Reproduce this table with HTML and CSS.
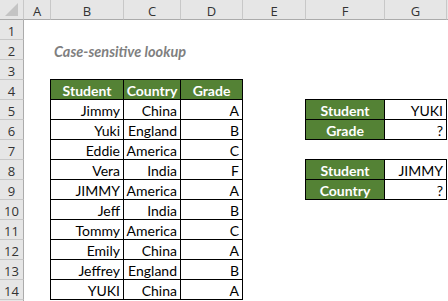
FILE: index.html
```html
<!DOCTYPE html>
<html>
<head>
<meta charset="utf-8">
<link rel="stylesheet" href="styles.css">
</head>
<body>
<div class="sheet">
  <div class="corner"><svg width="20" height="17" viewBox="0 0 20 17"><polygon points="18,3 18,16 5,16" fill="#c4c4c4"/></svg></div>
  <div class="ch">A</div><div class="ch">B</div><div class="ch">C</div><div class="ch">D</div><div class="ch">E</div><div class="ch">F</div><div class="ch">G</div><div class="ch end"></div>

  <div class="rh">1</div><div class="c"></div><div class="c"></div><div class="c"></div><div class="c"></div><div class="c"></div><div class="c"></div><div class="c"></div><div class="c"></div>

  <div class="rh">2</div><div class="c"></div><div class="c title span3">Case-sensitive lookup</div><div class="c"></div><div class="c"></div><div class="c"></div><div class="c"></div>

  <div class="rh">3</div><div class="c"></div><div class="c"></div><div class="c"></div><div class="c"></div><div class="c"></div><div class="c"></div><div class="c"></div><div class="c"></div>

  <div class="rh">4</div><div class="c"></div><div class="c hd bl bt">Student</div><div class="c hd bt">Country</div><div class="c hd bt">Grade</div><div class="c"></div><div class="c"></div><div class="c"></div><div class="c"></div>

  <div class="rh">5</div><div class="c"></div><div class="c td bl">Jimmy</div><div class="c td">China</div><div class="c td">A</div><div class="c"></div><div class="c hd bl bt">Student</div><div class="c td bt">YUKI</div><div class="c"></div>

  <div class="rh">6</div><div class="c"></div><div class="c td bl">Yuki</div><div class="c td">England</div><div class="c td">B</div><div class="c"></div><div class="c hd bl">Grade</div><div class="c td">?</div><div class="c"></div>

  <div class="rh">7</div><div class="c"></div><div class="c td bl">Eddie</div><div class="c td">America</div><div class="c td">C</div><div class="c"></div><div class="c"></div><div class="c"></div><div class="c"></div>

  <div class="rh">8</div><div class="c"></div><div class="c td bl">Vera</div><div class="c td">India</div><div class="c td">F</div><div class="c"></div><div class="c hd bl bt">Student</div><div class="c td bt">JIMMY</div><div class="c"></div>

  <div class="rh">9</div><div class="c"></div><div class="c td bl">JIMMY</div><div class="c td">America</div><div class="c td">A</div><div class="c"></div><div class="c hd bl">Country</div><div class="c td">?</div><div class="c"></div>

  <div class="rh">10</div><div class="c"></div><div class="c td bl">Jeff</div><div class="c td">India</div><div class="c td">B</div><div class="c"></div><div class="c"></div><div class="c"></div><div class="c"></div>

  <div class="rh">11</div><div class="c"></div><div class="c td bl">Tommy</div><div class="c td">America</div><div class="c td">C</div><div class="c"></div><div class="c"></div><div class="c"></div><div class="c"></div>

  <div class="rh">12</div><div class="c"></div><div class="c td bl">Emily</div><div class="c td">China</div><div class="c td">A</div><div class="c"></div><div class="c"></div><div class="c"></div><div class="c"></div>

  <div class="rh">13</div><div class="c"></div><div class="c td bl">Jeffrey</div><div class="c td">England</div><div class="c td">B</div><div class="c"></div><div class="c"></div><div class="c"></div><div class="c"></div>

  <div class="rh">14</div><div class="c"></div><div class="c td bl">YUKI</div><div class="c td">China</div><div class="c td">A</div><div class="c"></div><div class="c"></div><div class="c"></div><div class="c"></div>

  <div class="rh last"></div><div class="c"></div><div class="c"></div><div class="c"></div><div class="c"></div><div class="c"></div><div class="c"></div><div class="c"></div><div class="c"></div>
</div>
</body>
</html>
```
FILE: styles.css
```css
html, body {
  margin: 0;
  padding: 0;
  background: #ffffff;
  overflow: hidden;
}
.sheet {
  display: grid;
  grid-template-columns: 24px 27px 73px 57px 62px 63px 79px 62px 1px;
  grid-template-rows: repeat(15, 20px) 1px;
  width: 448px;
  height: 301px;
  overflow: hidden;
  font-family: Lato, "Liberation Sans", sans-serif;
  font-size: 14px;
  color: #000;
}
.sheet > div {
  box-sizing: border-box;
  display: flex;
  align-items: center;
  padding-top: 2px;
  white-space: nowrap;
  overflow: visible;
}
.corner {
  background: #e6e6e6;
  border-right: 1px solid #c8c8c8;
  border-bottom: 1px solid #ababab;
  padding-top: 0 !important;
  align-items: flex-start !important;
}
.ch {
  background: #e6e6e6;
  border-right: 1px solid #c8c8c8;
  border-bottom: 1px solid #ababab;
  justify-content: center;
  color: #333;
  font-family: "Open Sans", "Liberation Sans", sans-serif;
  font-size: 13px;
}
.ch.end { border-right: none; }
.rh {
  background: #e6e6e6;
  border-right: 1px solid #ababab;
  border-bottom: 1px solid #c8c8c8;
  justify-content: center;
  color: #333;
  font-family: "Open Sans", "Liberation Sans", sans-serif;
  font-size: 13px;
}
.rh.last { border-bottom: none; }
.c { background: #fff; }
.title {
  grid-column: span 3;
  font-style: italic;
  font-weight: bold;
  font-size: 14.5px;
  color: #7f7f7f;
  padding-left: 3px;
  position: relative;
  z-index: 1;
}
.hd {
  background: #548235;
  color: #fff;
  font-weight: bold;
  justify-content: center;
  border-right: 1px solid #000;
  border-bottom: 1px solid #000;
}
.td {
  justify-content: flex-end;
  padding-right: 3px;
  border-right: 1px solid #000;
  border-bottom: 1px solid #000;
}
.bl { box-shadow: -1px 0 0 #000; }
.bt { box-shadow: 0 -1px 0 #000; }
.bl.bt { box-shadow: -1px 0 0 #000, 0 -1px 0 #000, -1px -1px 0 #000; }
```
